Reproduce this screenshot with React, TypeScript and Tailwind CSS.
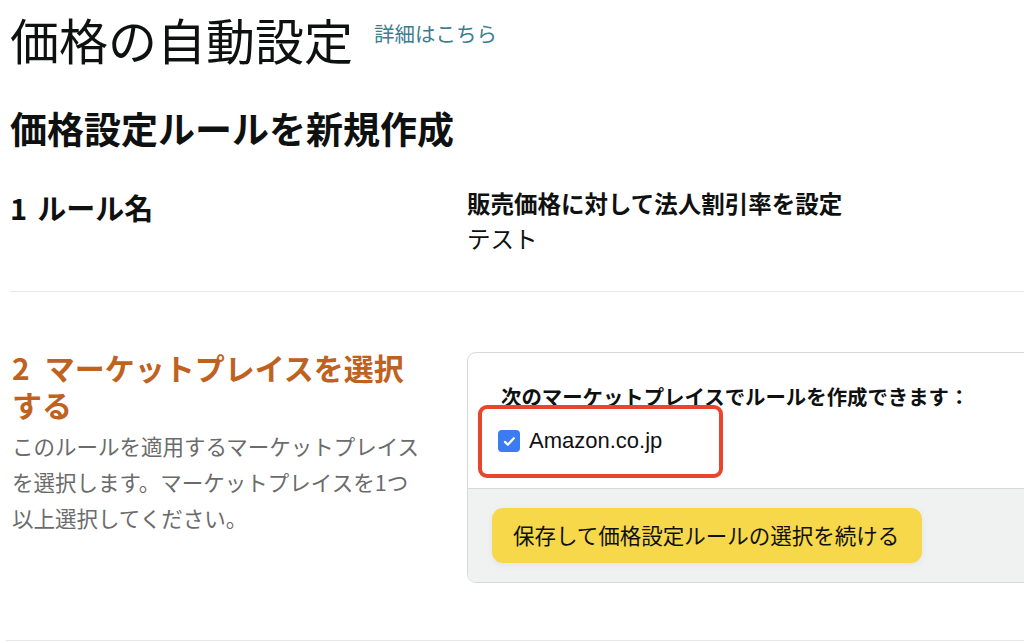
import React from "react";

function CheckMark() {
  return (
    <svg viewBox="0 0 16 16" className="h-[15px] w-[15px]" fill="none">
      <path d="M3.2 8.4l3 3 6.4-6.8" stroke="#fff" strokeWidth="2.4" strokeLinecap="round" strokeLinejoin="round" />
    </svg>
  );
}

export default function App() {
  return (
    <div className="min-h-[643px] w-[1024px] overflow-hidden bg-white text-[#0f1111] font-['Noto_Sans_CJK_JP','Noto_Sans',sans-serif]">
      <div className="pl-[10px]">
        {/* page title */}
        <div className="flex items-start pt-[14px]">
          <h1 className="text-[49px] leading-none font-normal">価格の自動設定</h1>
          <a className="ml-[21px] mt-[9px] text-[20.5px] leading-none text-[#3e7d91]">詳細はこちら</a>
        </div>

        <h2 className="mt-[47px] text-[37px] leading-[37px] font-bold">価格設定ルールを新規作成</h2>

        {/* step 1 */}
        <div className="mt-[39px] grid grid-cols-[457px_1fr]">
          <div className="flex gap-[10px] pt-[3px] text-[29px] leading-[37px] font-bold">
            <span>1</span>
            <span>ルール名</span>
          </div>
          <div className="text-[23.5px] leading-[35px]">
            <div className="font-bold">販売価格に対して法人割引率を設定</div>
            <div>テスト</div>
          </div>
        </div>
      </div>

      <div className="mt-[35px] ml-[10px] border-t border-[#e7e7e7]" />

      {/* step 2 */}
      <div className="mt-[57px] grid grid-cols-[467px_1fr]">
        <div className="pl-[12px]">
          <h3 className="w-[416px] text-[30px] leading-[37px] font-bold text-[#c0621f]">
            {"2\u2002マーケットプレイスを選択する"}
          </h3>
          <p className="mt-[5px] w-[416px] text-[21.5px] leading-[36px] text-[#6b6b6b]">
            このルールを適用するマーケットプレイスを選択します。マーケットプレイスを1つ以上選択してください。
          </p>
        </div>

        <div className="mt-[3px] w-[620px] rounded-[9px] border border-[#d5d9d9]">
          <div className="relative h-[135px] pl-[33px] pt-[29px]">
            <div className="text-[20.4px] leading-[28px] font-bold">次のマーケットプレイスでルールを作成できます：</div>
            <div className="mt-[19px] ml-[-3px] flex h-[24px] items-center gap-[9px]">
              <span className="flex h-[22px] w-[22px] items-center justify-center rounded-[4px] bg-[#3b7cf3]">
                <CheckMark />
              </span>
              <span className="text-[22px] leading-none font-['Liberation_Sans',Arial,sans-serif] text-[#111]">Amazon.co.jp</span>
            </div>
            <div className="absolute left-[10px] top-[52px] h-[73px] w-[245px] rounded-[9px] border-[4px] border-[#e8452c]" />
          </div>
          <div className="rounded-b-[9px] border-t border-[#d5d9d9] bg-[#f0f2f2] pl-[24px] pt-[19px] pb-[19px]">
            <button className="flex h-[55px] w-[430px] items-center rounded-[11px] bg-[#f7d84b] px-[21px] text-[21.5px] text-[#0f1111] shadow-[0_2px_5px_rgba(213,217,217,0.5)]">
              保存して価格設定ルールの選択を続ける
            </button>
          </div>
        </div>
      </div>

      <div className="mt-[57px] ml-[6px] border-t border-[#e7e7e7]" />
    </div>
  );
}
